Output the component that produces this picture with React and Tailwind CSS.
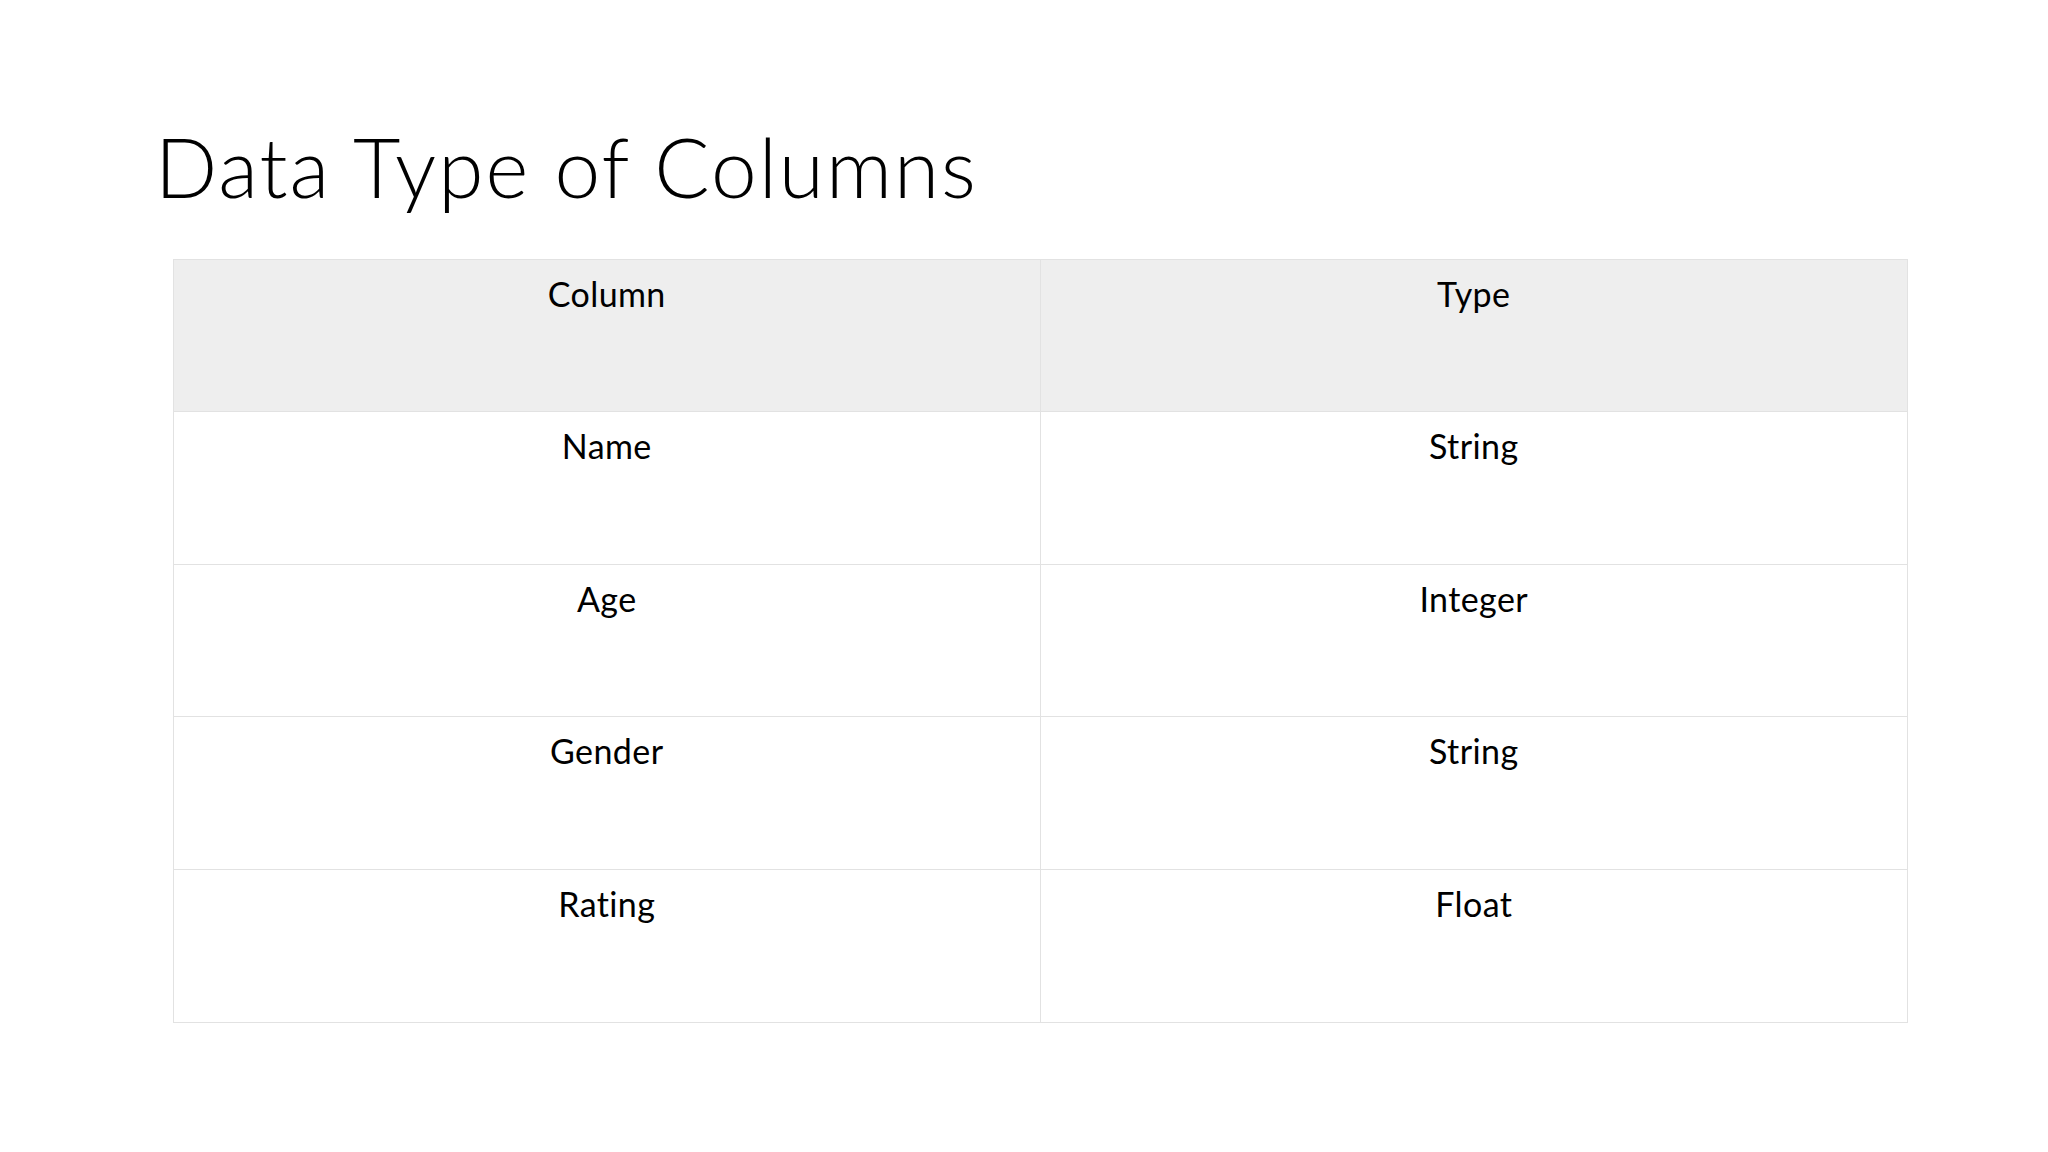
const rows = [
  ['Name', 'String'],
  ['Age', 'Integer'],
  ['Gender', 'String'],
  ['Rating', 'Float'],
];

function Cell({ children, first }) {
  return (
    <div
      className={`flex h-full justify-center pt-[14px] text-[34px] leading-[1.2] tracking-[0.4px] text-black ${
        first ? 'border-r border-[#e2e2e2]' : ''
      }`}
    >
      {children}
    </div>
  );
}

export default function App() {
  return (
    <div
      className="h-[1152px] w-[2048px] overflow-hidden bg-white [font-variant-ligatures:none]"
      style={{ fontFamily: 'Lato, "Open Sans", sans-serif' }}
    >
      <div className="pl-[155px] pt-[117px]">
        <h1 className="text-[82px] font-light leading-[1.2] tracking-[2px] text-black">Data Type of Columns</h1>
      </div>
      <div className="ml-[173px] mt-[44px] w-[1735px] border border-[#e2e2e2]">
        <div className="grid h-[152px] grid-cols-2 border-b border-[#e2e2e2] bg-[#eeeeee]">
          <Cell first>Column</Cell>
          <Cell>Type</Cell>
        </div>
        {rows.map(([name, type], i) => (
          <div
            key={name}
            className={`grid h-[152.5px] grid-cols-2 ${i < rows.length - 1 ? 'border-b border-[#e2e2e2]' : ''}`}
          >
            <Cell first>{name}</Cell>
            <Cell>{type}</Cell>
          </div>
        ))}
      </div>
    </div>
  );
}
